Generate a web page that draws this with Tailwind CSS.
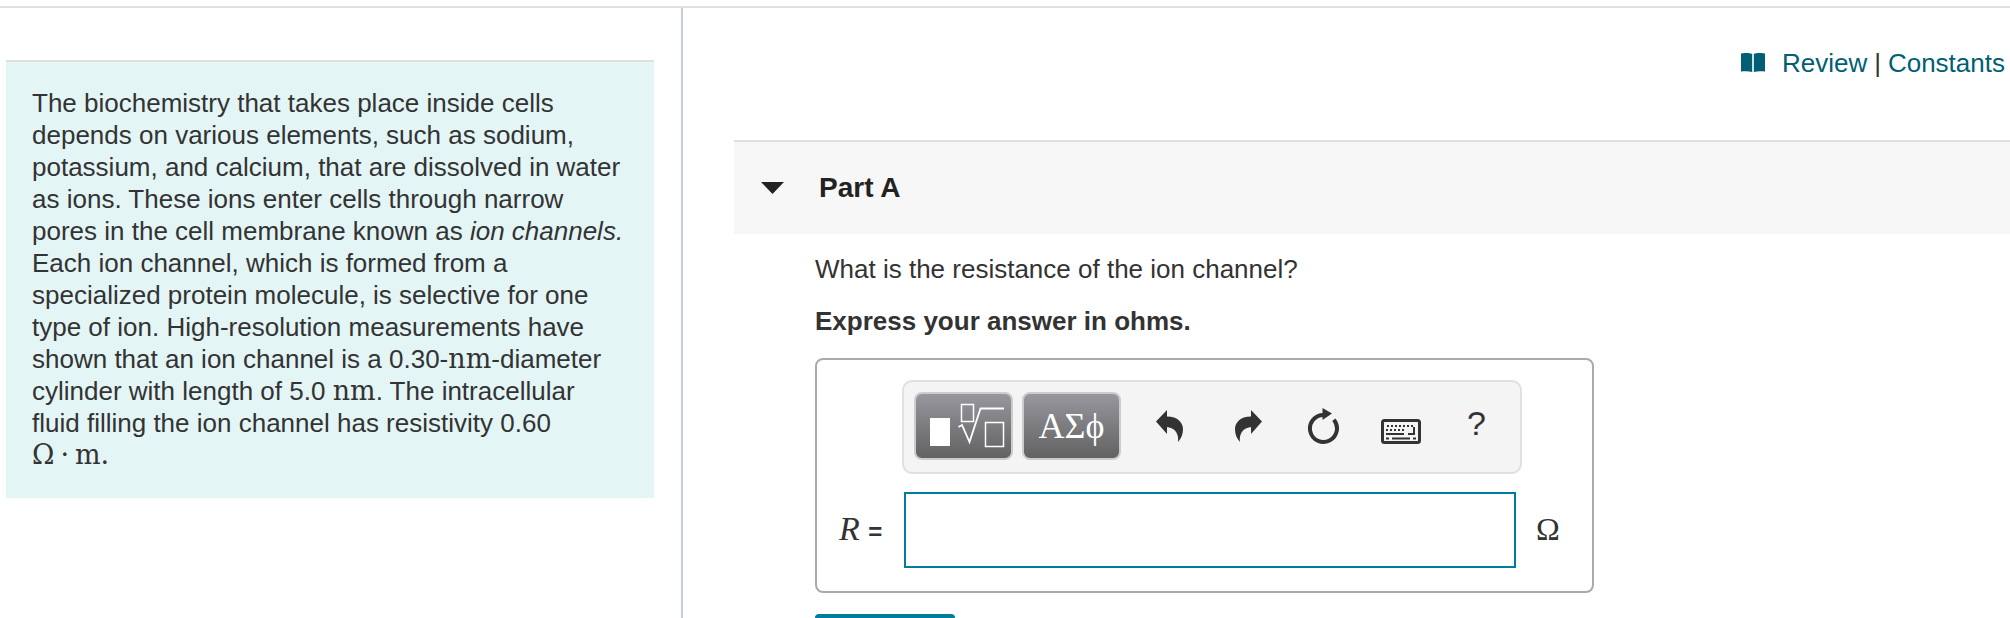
<!doctype html>
<html lang="en">

<head>
  <meta charset="UTF-8" />
  <title>Part A</title>
  <script src="https://cdn.jsdelivr.net/npm/@tailwindcss/browser@4"></script>
</head>

<body class="h-screen overflow-hidden bg-white pt-[6px] font-['Liberation_Sans',Arial,sans-serif] text-[26px] leading-[32px] text-[#333]">
  <div class="flex h-[612px] border-t-2 border-[#e0e0e0]">

    <!-- Intro column -->
    <div class="w-[683px] shrink-0 border-r-2 border-[#c0cfe0] pl-[6px] pt-[52px]">
      <div class="h-[438px] w-[648px] border-t-2 border-[#e0e0e0] bg-[#e4f5f6] pl-[26px] pr-[27px] pt-[25px]">
        <p>The biochemistry that takes place inside cells depends on various elements, such as sodium, potassium, and calcium, that are dissolved in water as ions. These ions enter cells through narrow pores in the cell membrane known as <i>ion channels.</i> Each ion channel, which is formed from a specialized protein molecule, is selective for one type of ion. High-resolution measurements have shown that an ion channel is a 0.30-<span class="font-['DejaVu_Serif',serif] text-[27px] leading-none">nm</span>-diameter cylinder with length of 5.0 <span class="font-['DejaVu_Serif',serif] text-[27px] leading-none">nm</span>. The intracellular fluid filling the ion channel has resistivity 0.60 <span class="whitespace-nowrap font-['DejaVu_Serif',serif] text-[27px] leading-none">Ω<span class="mx-[6px]">·</span>m.</span></p>
      </div>
    </div>

    <!-- Question column -->
    <div class="min-w-0 flex-1">
      <div class="flex h-[71px] items-end justify-end pr-[5px]">
        <div class="flex h-[32px] items-center">
          <svg class="mr-[17px]" width="24" height="20" viewBox="0 0 24 20" fill="#005f75">
            <path d="M0 0.500 C4 -0.300 8 -0.300 11.200 1 V19 C8 18 4 18 0 18.500 Z" />
            <path d="M24 0.500 C20 -0.300 16 -0.300 12.800 1 V19 C16 18 20 18 24 18.500 Z" />
          </svg>
          <span class="text-[#005f75]">Review</span>
          <span class="mx-[7px]">|</span>
          <span class="text-[#005f75]">Constants</span>
        </div>
      </div>

      <div class="ml-[51px] mt-[61px]">
        <div class="flex h-[94px] items-center border-t-2 border-[#e0e0e0] bg-[#f7f7f7]">
          <svg class="ml-[27px] mr-[35px]" width="23" height="12" viewBox="0 0 23 12" fill="#222">
            <path d="M0 0 H23 L11.500 12 Z" />
          </svg>
          <span class="text-[28px] font-bold text-[#222]">Part A</span>
        </div>

        <div class="pl-[81px]">
          <p class="mt-[19px]">What is the resistance of the ion channel?</p>
          <p class="mt-[20px] font-bold">Express your answer in ohms.</p>

          <div class="mt-[21px] h-[235px] w-[779px] rounded-[8px] border-2 border-[#aaa] pl-[85px] pt-[20px]">
            <!-- Toolbar -->
            <div class="flex h-[94px] w-[620px] items-start rounded-[10px] border-2 border-[#e0e0e0] bg-[#f4f4f4] pl-[10px] pt-[10px]">
              <div class="h-[68px] w-[99px] rounded-[8px] border-2 border-[#ccc] bg-linear-to-b from-[#98979f] to-[#626262]">
                <svg width="95" height="64" viewBox="0 0 95 64" fill="none" stroke="#fff" stroke-width="1.500">
                  <rect x="14" y="24" width="20" height="28" fill="#fff" stroke="none" />
                  <rect x="45.500" y="10.500" width="12" height="17" />
                  <path d="M42.500 33 L46 31 L53.500 48 L64.500 14.500 H88" stroke-width="1.800" />
                  <rect x="69.500" y="28.500" width="18" height="24" />
                </svg>
              </div>
              <div class="ml-[9px] flex h-[68px] w-[99px] items-center justify-center rounded-[8px] border-2 border-[#ccc] bg-linear-to-b from-[#98979f] to-[#626262] font-['Liberation_Serif',serif] text-[36px] text-white">
                ΑΣϕ
              </div>

              <svg class="ml-[35px] mt-[18px]" width="28" height="32" viewBox="0 0 28 32" fill="#333">
                <path d="M0 11.500 L11 0 V6.500 C22 6.500 27 13 27 19 C27 24 25.500 28 22 32 C23 25 20 18 11 17 V24 Z" />
              </svg>
              <svg class="ml-[50px] mt-[18px]" width="28" height="32" viewBox="0 0 28 32" fill="#333">
                <path d="M28 11.500 L17 0 V6.500 C6 6.500 1 13 1 19 C1 24 2.500 28 6 32 C5 25 8 18 17 17 V24 Z" />
              </svg>
              <svg class="ml-[45px] mt-[15px]" width="34" height="38" viewBox="0 0 34 38" fill="none" stroke="#333" stroke-width="4">
                <path d="M26.800 12.800 A13.500 13.500 0 1 1 16.500 8" />
                <path d="M15.500 1 L25 6.500 L15.500 13 Z" fill="#333" stroke="none" />
              </svg>
              <svg class="ml-[40px] mt-[27px]" width="40" height="25" viewBox="0 0 40 25" fill="none" stroke="#333">
                <rect x="1.500" y="1.500" width="37" height="22" rx="2" stroke-width="3" />
                <path d="M6 7 H32 M5 11 H24" stroke-width="2" stroke-dasharray="2 2" />
                <path d="M5 15 H23 M27 15 H33 V8 M11 19.500 H29 M5 19.500 H8 M32 19.500 H35" stroke-width="2" />
              </svg>
              <span class="ml-[46px] mt-[11px] text-[34px] leading-[40px] text-[#333]">?</span>
            </div>

            <!-- Answer row -->
            <div class="-ml-[85px] mt-[18px] flex items-center">
              <span class="ml-[22px] w-[65px] whitespace-nowrap font-['Liberation_Serif',serif] text-[34px]"><i>R</i> <span class="font-['Liberation_Sans',sans-serif] text-[24px] font-bold">=</span></span>
              <div class="h-[76px] w-[612px] border-2 border-[#007c9c] bg-white"></div>
              <span class="mb-[3px] ml-[20px] font-['Liberation_Serif',serif] text-[32px]">Ω</span>
            </div>
          </div>

          <!-- Submit button, cut off by the bottom of the window -->
          <div class="mt-[21px] h-[4px] w-[140px] rounded-t-[4px] bg-[#007c9c]"></div>
        </div>
      </div>
    </div>
  </div>
</body>

</html>
